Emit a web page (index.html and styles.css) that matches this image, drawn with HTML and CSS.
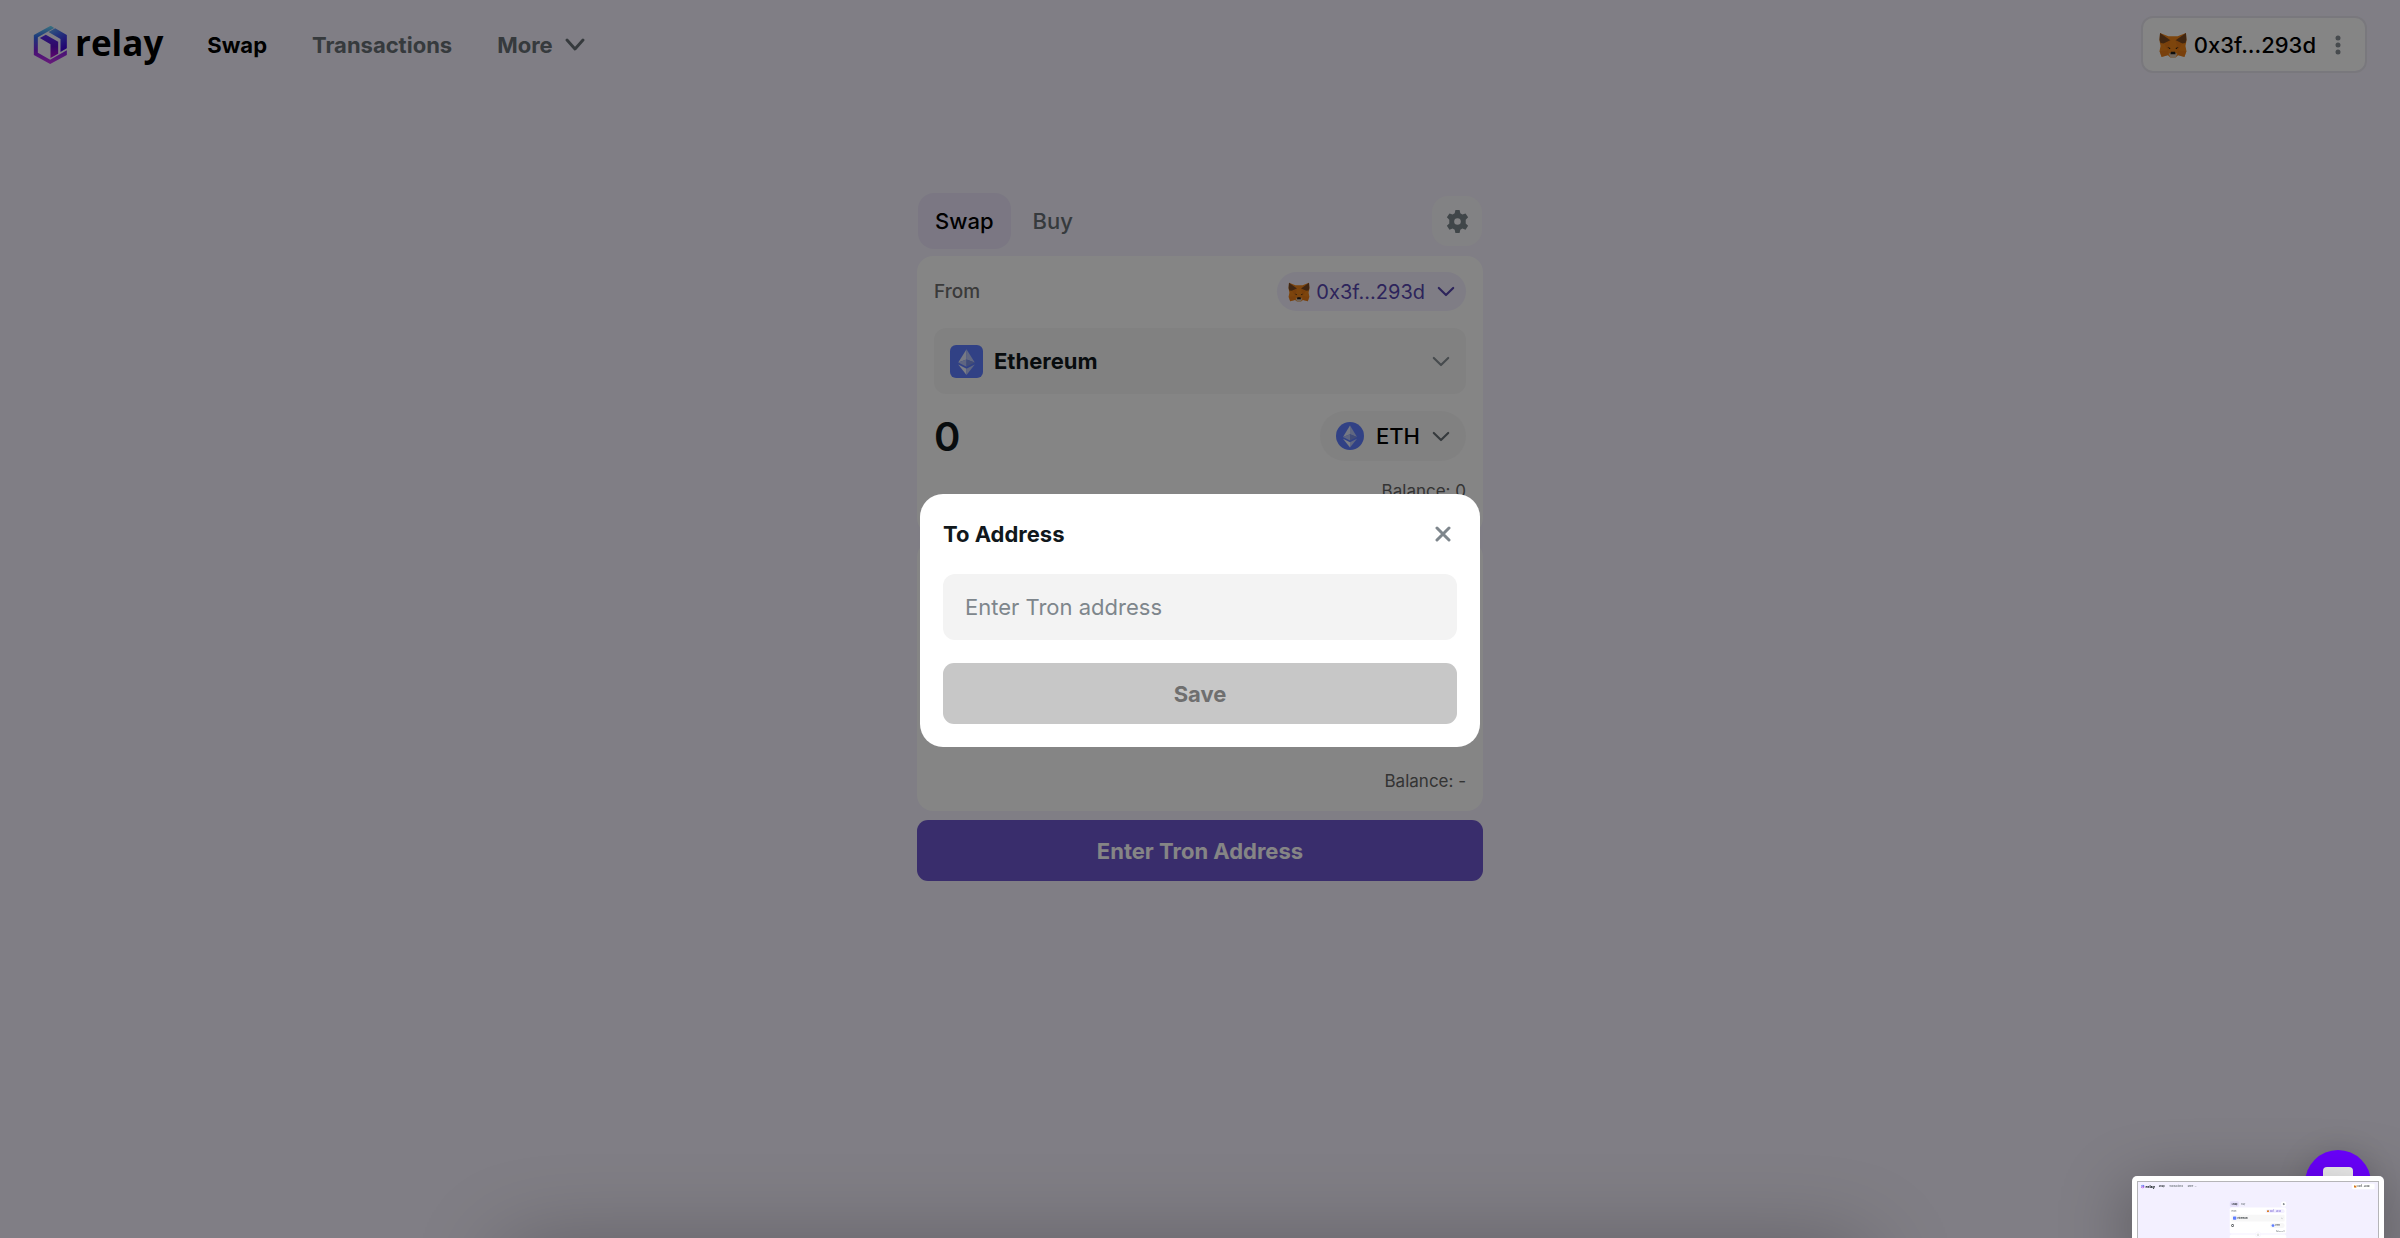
FILE: index.html
```
<!DOCTYPE html>
<html lang="en">
<head>
<meta charset="utf-8">
<title>Relay</title>
<link rel="stylesheet" href="styles.css">
</head>
<body>
<svg class="defs" width="0" height="0" aria-hidden="true">
  <defs>
    <linearGradient id="ring" x1="0" y1="0" x2="0" y2="1">
      <stop offset="0" stop-color="#6cd8f5"/><stop offset=".3" stop-color="#3468ee"/><stop offset=".65" stop-color="#8420e0"/><stop offset="1" stop-color="#c935ea"/>
    </linearGradient>
    <linearGradient id="side" x1="0" y1="0" x2=".5" y2="1">
      <stop offset="0" stop-color="#67b5f5"/><stop offset=".45" stop-color="#4560ee"/><stop offset="1" stop-color="#4108dc"/>
    </linearGradient>
    <linearGradient id="core" x1="0" y1="0" x2="0" y2="1">
      <stop offset="0" stop-color="#5530ef"/><stop offset=".5" stop-color="#5c10c8"/><stop offset="1" stop-color="#b90bd2"/>
    </linearGradient>
    <symbol id="fox" viewBox="0 0 54 50">
      <path fill="#f08519" d="M2 2 18 8H36L52 2 53 17 51 27 53 37 49 48 37 45 32 49H22L17 45 5 48 1 37 3 27 1 17z"/>
      <path fill="#7c4a22" d="M2 2 22 16 9 22 3 21 1 15zM52 2 32 16 45 22 51 21 53 15z"/>
      <path fill="#df7118" d="M18 8 22 16 19 32 17 45 5 48 1 37 17 35 10 23 22 16zM36 8 32 16 35 32 37 45 49 48 53 37 37 35 44 23 32 16z" opacity=".45"/>
      <path fill="#d8c3ae" d="M19 42 23 40H31L35 42 32 49H22z"/>
      <path fill="#1d1b1a" d="M23 38H31L32 43H22zM16 29 22 31 21 33zM38 29 32 31 33 33z"/>
    </symbol>
    <symbol id="eth" viewBox="0 0 32 32">
      <path fill="#e3e9fe" d="M16 4 8 17 16 14z"/>
      <path fill="#b9c6f8" d="M16 4V14L24 17z"/>
      <path fill="#b5c2f7" d="M8 17 16 14V21z"/>
      <path fill="#7d92e6" d="M16 14 24 17 16 21z"/>
      <path fill="#edf1ff" d="M8 19 16 23V29z"/>
      <path fill="#b9c6f8" d="M24 19 16 23V29z"/>
    </symbol>
    <symbol id="chevron" viewBox="0 0 20 12">
      <path d="M2 2 10 10 18 2" fill="none" stroke="currentColor" stroke-width="2.4" stroke-linecap="round" stroke-linejoin="round"/>
    </symbol>
    <symbol id="chevron-bold" viewBox="0 0 20 13">
      <path d="M2 2 10 11 18 2" fill="none" stroke="currentColor" stroke-width="2.900" stroke-linecap="round" stroke-linejoin="round"/>
    </symbol>
    <symbol id="logo" viewBox="40 30 104 120">
      <path fill="url(#ring)" d="M91 33 94 33 103 39 54 67V113L91 134 141 106V120L91 147 42 120V60z"/>
      <path fill="url(#side)" d="M86 51 106 40 141 60V100L122 111V72z"/>
      <path fill="url(#core)" d="M60 69 78 59 115 80V116L92 129V88z"/>
    </symbol>
    <symbol id="gear" viewBox="0 0 24 24">
      <path fill="currentColor" fill-rule="evenodd" d="M10 1h4l.7 3.1 2 1.1 3-1 2.500 3.800-2.300 2.200v3.600l2.300 2.200-2.500 3.800-3-1-2 1.100L14 23h-4l-.7-3.100-2-1.100-3 1L1.800 16l2.300-2.200v-3.600L1.800 8l2.500-3.800 3 1 2-1.100zM12 8.800a3.200 3.200 0 1 0 0 6.400 3.200 3.200 0 0 0 0-6.400z"/>
    </symbol>
  </defs>
</svg>

<header class="topbar">
  <a class="brand" href="#"><svg class="brand-mark"><use href="#logo"/></svg><span>relay</span></a>
  <nav class="nav">
    <a class="active" href="#">Swap</a>
    <a href="#">Transactions</a>
    <button type="button">More <svg class="nav-chevron"><use href="#chevron-bold"/></svg></button>
  </nav>
  <button class="wallet" type="button">
    <svg class="fox"><use href="#fox"/></svg><span>0x3f...293d</span>
    <svg class="dots" viewBox="0 0 6 20"><circle cx="3" cy="3" r="2.500"/><circle cx="3" cy="10" r="2.500"/><circle cx="3" cy="17" r="2.500"/></svg>
  </button>
</header>

<main class="widget">
  <div class="tabs">
    <button class="tab selected" type="button">Swap</button>
    <button class="tab" type="button">Buy</button>
    <button class="settings" type="button" aria-label="Settings"><svg><use href="#gear"/></svg></button>
  </div>
  <section class="card from">
    <div class="row">
      <span class="label">From</span>
      <button class="account" type="button"><svg class="fox small"><use href="#fox"/></svg><span>0x3f...293d</span><svg class="chev"><use href="#chevron"/></svg></button>
    </div>
    <button class="chain" type="button"><svg class="chain-icon"><use href="#eth"/></svg><span>Ethereum</span><svg class="chev"><use href="#chevron"/></svg></button>
    <div class="row amount-row">
      <input class="amount" type="text" value="0" aria-label="Amount">
      <button class="token" type="button"><svg class="token-icon"><use href="#eth"/></svg><span>ETH</span><svg class="chev"><use href="#chevron"/></svg></button>
    </div>
    <p class="balance">Balance: 0</p>
  </section>
  <section class="card to">
    <p class="balance">Balance: -</p>
  </section>
  <button class="cta" type="button">Enter Tron Address</button>
</main>

<div class="overlay">
  <form class="modal" role="dialog" aria-labelledby="modal-title">
    <div class="modal-head">
      <h2 id="modal-title"><label for="address">To Address</label></h2>
      <button class="close" type="button" aria-label="Close"><svg viewBox="0 0 16 16"><path d="M2 2 14 14M14 2 2 14" fill="none" stroke="currentColor" stroke-width="3" stroke-linecap="round"/></svg></button>
    </div>
    <input class="address" id="address" type="text" placeholder="Enter Tron address">
    <button class="save" type="button" disabled>Save</button>
  </form>
</div>

<div class="dock-shade"></div>
<button class="chat" type="button" aria-label="Open chat"><svg viewBox="0 0 66 66"><rect x="18" y="17" width="30" height="32" rx="4" fill="#f0f0f0"/></svg></button>
<div class="preview">
  <svg viewBox="0 0 2400 560" preserveAspectRatio="xMidYMin slice" aria-hidden="true">
    <rect width="2400" height="560" fill="#f3f0ff"/>
    <use href="#logo" x="30" y="25" width="35" height="40"/>
    <g class="mini">
      <text class="heavy" x="75" y="55" font-size="36">relay</text>
      <text class="bold" x="207" y="53">Swap</text>
      <text class="bold grey" x="312" y="53">Transactions</text>
      <text class="bold grey" x="498" y="53">More</text>
      <path class="line" d="M568 41 576 49 584 41"/>
      <rect x="2141" y="17" width="225" height="55" rx="10" fill="#fff"/>
      <use href="#fox" x="2159" y="32" width="27" height="26"/>
      <text x="2193" y="53">0x3f...293d</text>
      <rect x="918" y="193" width="92" height="56" rx="16" fill="#e6e0fb"/>
      <text x="935" y="229">Swap</text><text class="grey" x="1033" y="229">Buy</text>
      <rect x="1432" y="196" width="50" height="50" rx="16" fill="#fff"/>
      <use href="#gear" x="1445" y="210" width="24" height="24"/>
      <rect x="917" y="256" width="566" height="260" rx="16" fill="#fff"/>
      <rect x="917" y="524" width="566" height="80" rx="16" fill="#fff"/>
      <text class="grey" x="934" y="299" font-size="20">From</text>
      <rect x="1278" y="272" width="188" height="39" rx="20" fill="#f3f0ff"/>
      <use href="#fox" x="1289" y="282" width="21" height="20"/>
      <text x="1317" y="299" font-size="20" fill="#6e56cf">0x3f...293d</text>
      <rect x="934" y="328" width="532" height="66" rx="10" fill="#f7f7f7"/>
      <rect x="950" y="344" width="33" height="33" rx="6" fill="#5f7eff"/>
      <text class="bold" x="995" y="369">Ethereum</text>
      <path class="line" d="M1432 359 1441 367 1449 359"/>
      <text class="bold" x="933" y="451" font-size="40">0</text>
      <rect x="1320" y="411" width="146" height="50" rx="25" fill="#f7f7f7"/>
      <circle cx="1350" cy="436" r="14" fill="#5f7eff"/>
      <text x="1376" y="444">ETH</text>
      <text class="grey" x="1382" y="497" font-size="17">Balance: 0</text>
      <circle cx="1200" cy="525" r="26" fill="#fff" stroke="#f3f0ff" stroke-width="6"/>
      <path class="line" d="M1200 515V535M1192 527 1200 535 1208 527"/>
    </g>
  </svg>
</div>
</body>
</html>
```
FILE: styles.css
```
* { box-sizing: border-box; }
body {
  margin: 0;
  min-height: 100vh;
  overflow: hidden;
  background: #f5f2ff;
  color: #11181c;
  font: 500 22px/28px Inter, "Liberation Sans", sans-serif;
}
button, input { font: inherit; color: inherit; border: 0; padding: 0; background: none; }
a { color: inherit; text-decoration: none; }
svg { display: block; flex: none; }
h2, p { margin: 0; }
.defs { position: absolute; }

.topbar { display: flex; align-items: center; padding: 16px 33px; }
.brand { display: flex; align-items: center; gap: 7px; color: #000; font: 700 35px/40px "Open Sans", sans-serif; }
.brand-mark { width: 35px; height: 40px; }
.brand span { padding-bottom: 4px; }
.nav { display: flex; gap: 45px; margin-left: 44px; font-weight: 700; color: #687076; }
.nav .active { color: #000; }
.nav button { display: flex; align-items: center; gap: 12px; font-weight: 700; }
.nav-chevron { width: 20px; height: 13px; }
.wallet {
  display: flex; align-items: center; gap: 7px; margin-left: auto;
  height: 57px; padding: 0 24px 0 16px;
  background: #fff; color: #000; border: 2px solid #e9e6f0; border-radius: 12px;
}
.fox { width: 28px; height: 26px; }
.fox.small { width: 22px; height: 20px; }
.dots { width: 6px; height: 20px; margin-left: 12px; fill: #889096; }

.widget { width: 566px; max-width: 100%; margin: 104px auto 0; }
.tabs { display: flex; align-items: center; gap: 5px; padding: 0 1px; margin-bottom: 7px; }
.tab { height: 56px; padding: 0 17px; border-radius: 16px; color: #687076; }
.tab.selected { background: #ebe5fc; color: #000; }
.settings { display: grid; place-items: center; width: 50px; height: 50px; margin-left: auto; border-radius: 16px; background: #faf9fe; color: #7b868c; }
.settings svg { width: 25px; height: 25px; }
.card { padding: 16px 17px; background: #fff; border-radius: 16px; }
.from { min-height: 278px; }
.to { display: flex; flex-direction: column; justify-content: flex-end; min-height: 270px; margin-top: 7px; }
.row { display: flex; align-items: center; justify-content: space-between; }
.label { font-size: 19px; color: #6f6f6f; }
.account {
  display: flex; align-items: center; gap: 6px; height: 39px; padding: 0 11px;
  border-radius: 20px; background: #f3f0ff; color: #5746af; font-size: 20px; font-weight: 400;
}
.account .chev { margin-left: 6px; }
.chev { width: 18px; height: 11px; }
.chain {
  display: flex; align-items: center; gap: 11px; width: 100%; height: 66px; margin: 17px 0;
  padding: 0 16px; border-radius: 12px; background: #f8f8f8; font-weight: 700;
}
.chain .chev { margin-left: auto; color: #889096; }
.chain-icon { width: 33px; height: 33px; border-radius: 6px; background: #5f7eff; }
.amount { width: 200px; height: 50px; font-size: 40px; font-weight: 600; }
.token { display: flex; align-items: center; gap: 12px; height: 50px; padding: 0 16px; border-radius: 25px; background: #f8f8f8; color: #000; }
.token-icon { width: 28px; height: 28px; border-radius: 50%; background: #5f7eff; }
.token .chev { color: #687076; }
.balance { margin-top: 16px; text-align: right; font-size: 17px; font-weight: 400; color: #646464; }
.cta, .save { display: block; width: 100%; height: 61px; border-radius: 11px; font-weight: 700; }
.cta { margin-top: 9px; background: #6e56cf; color: #fff; }

.overlay { position: fixed; inset: 0; display: grid; place-items: center; padding-top: 3px; background: rgba(0, 0, 0, .478); }
.modal { width: 560px; max-width: 100%; padding: 23px; border-radius: 23px; background: #fff; }
.modal-head { display: flex; align-items: center; justify-content: space-between; height: 34px; margin-bottom: 23px; }
.modal-head h2 { font-size: 22px; font-weight: 700; }
.close { padding: 0 6px; color: #7e868c; }
.close svg { width: 16px; height: 16px; }
.address { display: block; width: 100%; height: 66px; margin-bottom: 23px; padding: 0 22px; border-radius: 12px; background: #f3f3f3; font-weight: 400; }
.address::placeholder { color: #7e868c; opacity: 1; }
.save { background: #c7c7c7; color: #6f6f6f; }

.dock-shade { position: fixed; left: 520px; right: 550px; bottom: -75px; height: 50px; box-shadow: 0 0 90px 15px rgba(0, 0, 0, .28); }
.chat { position: fixed; right: 29px; bottom: 22px; width: 66px; height: 66px; border-radius: 50%; background: #6b00ff; box-shadow: 0 2px 30px rgba(0, 0, 0, .15); }
.preview {
  position: fixed; right: 16px; bottom: 0; width: 252px; height: 62px; padding: 5px 5px 0;
  border-radius: 5px 5px 0 0; background: #fff; box-shadow: 0 20px 70px rgba(0, 0, 0, .4);
}
.preview svg { width: 242px; height: 57px; border: 1px solid #b5b5b8; border-bottom: 0; }
.mini { font-size: 22px; fill: #11181c; color: #687076; }
.mini .bold { font-weight: 600; }
.mini .heavy { font-family: "Open Sans", sans-serif; font-weight: 800; }
.mini .grey { fill: #687076; }
.mini .line { fill: none; stroke: #687076; stroke-width: 3; }
```
